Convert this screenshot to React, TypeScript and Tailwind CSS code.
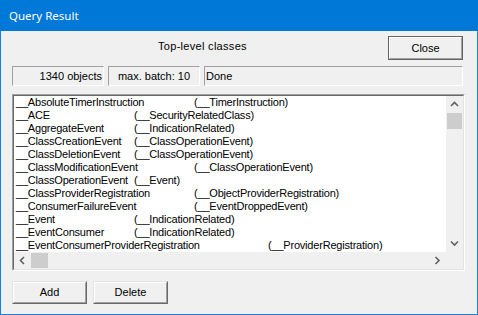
import React from 'react';

const rows: { name: string; parent: string; col: 1 | 2 | 3 }[] = [
  { name: '__AbsoluteTimerInstruction', parent: '(__TimerInstruction)', col: 2 },
  { name: '__ACE', parent: '(__SecurityRelatedClass)', col: 1 },
  { name: '__AggregateEvent', parent: '(__IndicationRelated)', col: 1 },
  { name: '__ClassCreationEvent', parent: '(__ClassOperationEvent)', col: 1 },
  { name: '__ClassDeletionEvent', parent: '(__ClassOperationEvent)', col: 1 },
  { name: '__ClassModificationEvent', parent: '(__ClassOperationEvent)', col: 2 },
  { name: '__ClassOperationEvent', parent: '(__Event)', col: 1 },
  { name: '__ClassProviderRegistration', parent: '(__ObjectProviderRegistration)', col: 2 },
  { name: '__ConsumerFailureEvent', parent: '(__EventDroppedEvent)', col: 2 },
  { name: '__Event', parent: '(__IndicationRelated)', col: 1 },
  { name: '__EventConsumer', parent: '(__IndicationRelated)', col: 1 },
  { name: '__EventConsumerProviderRegistration', parent: '(__ProviderRegistration)', col: 3 },
];

// tab stops of the list box, measured from the text start
const colWidth = { 1: 'w-[118px]', 2: 'w-[178px]', 3: 'w-[252px]' };

function Chevron({ dir }: { dir: 'up' | 'down' | 'left' | 'right' }) {
  const pts = {
    up: '1,6 4.5,2.5 8,6',
    down: '1,2.5 4.5,6 8,2.5',
    left: '6,1 2.5,4.5 6,8',
    right: '2.5,1 6,4.5 2.5,8',
  }[dir];
  return (
    <svg width="9" height="9" viewBox="0 0 9 9">
      <polyline points={pts} fill="none" stroke="#606060" strokeWidth="1.6" />
    </svg>
  );
}

function Button({ label, primary }: { label: string; primary?: boolean }) {
  if (primary) {
    return (
      <div className="w-[75px] h-[24px] border border-[#646464]">
        <div className="h-full border-t border-l border-white border-b border-r border-b-[#a0a0a0] border-r-[#a0a0a0] flex items-center justify-center text-black">
          {label}
        </div>
      </div>
    );
  }
  return (
    <div className="w-[75px] h-[23px] border-t border-l border-[#e3e3e3] border-b border-r border-b-[#696969] border-r-[#696969]">
      <div className="h-full border-t border-l border-white border-b border-r border-b-[#a0a0a0] border-r-[#a0a0a0] flex items-center justify-center text-black">
        {label}
      </div>
    </div>
  );
}

function Field({ children, className }: { children: React.ReactNode; className: string }) {
  return (
    <div className={`h-[20px] border-t border-l border-[#a0a0a0] border-b border-r border-b-white border-r-white flex items-center ${className}`}>
      {children}
    </div>
  );
}

export default function App() {
  return (
    <div className="w-[478px] h-[315px] flex flex-col bg-[#f0f0f0] text-[11px] text-black" style={{ fontFamily: '"Liberation Sans", Arial, sans-serif' }}>
      <div className="h-[31px] shrink-0 bg-[#0078d7] flex items-center pl-[9px] text-white text-[11.5px]" style={{ fontFamily: '"Noto Sans", "Open Sans", sans-serif' }}>
        Query Result
      </div>
      <div className="flex-1 border-x border-b border-[#1e7fd4] flex flex-col pl-[11px]">
        <div className="flex mt-[5px] h-[24px]">
          <div className="w-[376px] pl-[146px] pt-[2px] tracking-[0.3px]">Top-level classes</div>
          <Button label="Close" primary />
        </div>
        <div className="flex gap-[4px] mt-[6px]">
          <Field className="w-[92px] justify-end pr-[1px]">1340 objects</Field>
          <Field className="w-[92px] justify-center">max. batch: 10</Field>
          <Field className="w-[259px] pl-[1px]">Done</Field>
        </div>
        <div className="mt-[8px] w-[453px] h-[177px] border-t border-l border-[#a0a0a0] border-b border-r border-b-white border-r-white">
          <div className="w-full h-full border-t border-l border-[#696969] border-b border-r border-b-[#e3e3e3] border-r-[#e3e3e3] flex flex-col bg-white">
            <div className="flex h-[156px]">
              <div className="flex-1 overflow-hidden pl-[2px] whitespace-nowrap tracking-[-0.2px]">
                {rows.map((r) => (
                  <div key={r.name} className="flex h-[13px] leading-[13px]">
                    <span className={`${colWidth[r.col]} shrink-0`}>{r.name}</span>
                    <span>{r.parent}</span>
                  </div>
                ))}
              </div>
              <div className="w-[17px] bg-[#f0f0f0] flex flex-col">
                <div className="h-[17px] flex items-center justify-center"><Chevron dir="up" /></div>
                <div className="h-[16px] mx-[1px] bg-[#cdcdcd]" />
                <div className="flex-1" />
                <div className="h-[17px] flex items-center justify-center"><Chevron dir="down" /></div>
              </div>
            </div>
            <div className="flex h-[17px] bg-[#f0f0f0]">
              <div className="w-[17px] flex items-center justify-center"><Chevron dir="left" /></div>
              <div className="w-[17px] my-[1px] bg-[#cdcdcd]" />
              <div className="flex-1" />
              <div className="w-[17px] flex items-center justify-center"><Chevron dir="right" /></div>
              <div className="w-[17px]" />
            </div>
          </div>
        </div>
        <div className="flex gap-[6px] mt-[10px]">
          <Button label="Add" />
          <Button label="Delete" />
        </div>
      </div>
    </div>
  );
}
